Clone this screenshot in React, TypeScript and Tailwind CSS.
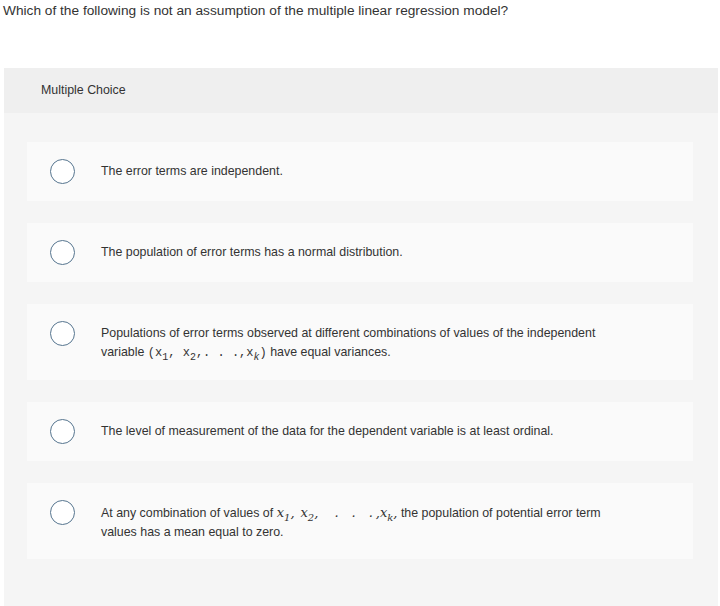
import React from 'react'

const sans = { fontFamily: '"Liberation Sans", Arial, sans-serif' }

function Sub({ children }: { children: React.ReactNode }) {
    return <span className="inline-block text-[10px] leading-[10px] align-[-4px]">{children}</span>
}

function Mono({ children }: { children: React.ReactNode }) {
    return <span className="font-['Liberation_Mono',monospace] text-[12px]">{children}</span>
}

function Serif({ children }: { children: React.ReactNode }) {
    return <span className="font-['DejaVu_Serif',serif] italic text-[13px]">{children}</span>
}

const options: React.ReactNode[] = [
    <>The error terms are independent.</>,
    <>The population of error terms has a normal distribution.</>,
    <>
        Populations of error terms observed at different combinations of values of the independent variable{' '}
        <Mono>
            (x<Sub>1</Sub>, x<Sub>2</Sub>,. . .,x<Sub><i>k</i></Sub>)
        </Mono>{' '}
        have equal variances.
    </>,
    <>The level of measurement of the data for the dependent variable is at least ordinal.</>,
    <>
        At any combination of values of{' '}
        <Serif>
            <span>x<Sub>1</Sub>,</span>
            <span className="ml-[6px]">x<Sub>2</Sub>,</span>
            <span className="ml-[16px]">.</span>
            <span className="ml-[13px]">.</span>
            <span className="ml-[13px]">.</span>
            <span className="ml-[3px]">,x<Sub>k</Sub>,</span>
        </Serif>{' '}
        the population of potential error term values has a mean equal to zero.
    </>,
]

export default function App() {
    return (
        <div className="w-[720px] h-[606px] bg-white text-[#333] overflow-hidden" style={sans}>
            <p className="pl-[3px] pt-[2px] text-[13.7px] leading-[18px] text-[#333]">
                Which of the following is not an assumption of the multiple linear regression model?
            </p>

            <div className="mt-[48px] ml-[4px] w-[714px] h-[538px] bg-[#f5f5f5]">
                <div className="h-[45px] bg-[#efefef] flex items-center pl-[37px] text-[12.4px] text-[#333]">
                    Multiple Choice
                </div>

                <div className="pt-[29px] pl-[23px] pr-[25px] flex flex-col gap-[22px]">
                    {options.map((opt, i) => (
                        <div key={i} className="bg-[#fafafa] flex items-start px-[23px] py-[17px]">
                            <div className="w-[25px] h-[25px] shrink-0 rounded-full border-[1.5px] border-[#56758f] bg-white" />
                            <div className="ml-[26px] pt-[3px] pr-[57px] text-[12.4px] leading-[19px] text-[#333]">
                                {opt}
                            </div>
                        </div>
                    ))}
                </div>
            </div>
        </div>
    )
}
